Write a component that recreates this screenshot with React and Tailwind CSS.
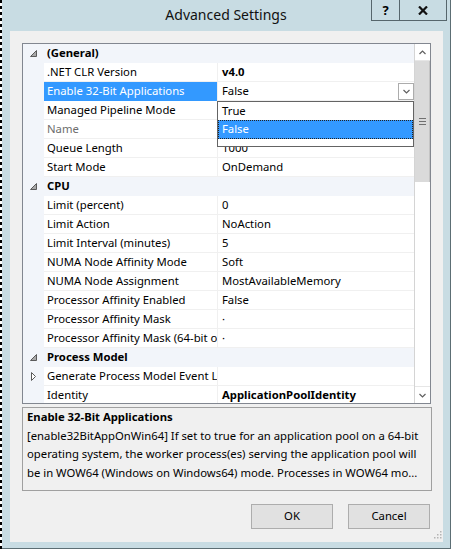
import React from 'react';

const rows = [
  { cat: true, name: '(General)' },
  { name: '.NET CLR Version', value: 'v4.0', bold: true },
  { name: 'Enable 32-Bit Applications', value: 'False', selected: true },
  { name: 'Managed Pipeline Mode', value: '' },
  { name: 'Name', value: '', dim: true },
  { name: 'Queue Length', value: '1000' },
  { name: 'Start Mode', value: 'OnDemand' },
  { cat: true, name: 'CPU' },
  { name: 'Limit (percent)', value: '0' },
  { name: 'Limit Action', value: 'NoAction' },
  { name: 'Limit Interval (minutes)', value: '5' },
  { name: 'NUMA Node Affinity Mode', value: 'Soft' },
  { name: 'NUMA Node Assignment', value: 'MostAvailableMemory' },
  { name: 'Processor Affinity Enabled', value: 'False' },
  { name: 'Processor Affinity Mask', value: '·' },
  { name: 'Processor Affinity Mask (64-bit option)', value: '·' },
  { cat: true, name: 'Process Model' },
  { name: 'Generate Process Model Event Log Entry', value: '', collapsed: true },
  { name: 'Identity', value: 'ApplicationPoolIdentity', bold: true },
];

const Expanded = () => (
  <svg width="7" height="7" viewBox="0 0 7 7">
    <path d="M6.5 0.5V6.5H0.5Z" fill="#a8a8a8" stroke="#5a5a5a" />
  </svg>
);

const Collapsed = () => (
  <svg width="6" height="9" viewBox="0 0 6 9">
    <path d="M0.5 0.5L4.5 4.5L0.5 8.5Z" fill="#fff" stroke="#5a5a5a" />
  </svg>
);

const Chevron = ({ up }) => (
  <svg width="7" height="5" viewBox="0 0 7 5">
    <path d={up ? 'M0.5 4L3.5 1L6.5 4' : 'M0.5 1L3.5 4L6.5 1'} fill="none" stroke="#606060" strokeWidth="1.2" />
  </svg>
);

const PropRow = ({ row }) => {
  if (row.cat) {
    return (
      <div className="flex h-[19px] shrink-0 bg-[#f2f5fa]">
        <div className="w-[21px] flex items-center justify-center">
          <Expanded />
        </div>
        <div className="pl-[3px] flex items-center font-bold">{row.name}</div>
      </div>
    );
  }
  return (
    <div className="flex h-[19px] shrink-0">
      <div className="w-[21px] bg-[#f2f5fa] flex items-center justify-center">
        {row.collapsed && <Collapsed />}
      </div>
      <div
        className={
          row.selected
            ? 'w-[174px] pl-[3px] flex items-center overflow-hidden whitespace-nowrap bg-[#3399ff] text-white border-r border-[#f0f0f0]'
            : row.dim
              ? 'w-[174px] pl-[3px] flex items-center overflow-hidden whitespace-nowrap text-[#6d6d6d] bg-white border-r border-b border-[#f0f0f0]'
              : 'w-[174px] pl-[3px] flex items-center overflow-hidden whitespace-nowrap bg-white border-r border-b border-[#f0f0f0]'
        }
      >
        {row.name}
      </div>
      <div className="flex-1 pl-[4px] flex items-center justify-between bg-white border-b border-[#f0f0f0] whitespace-nowrap overflow-hidden">
        <span className={row.bold ? 'font-bold' : ''}>{row.value}</span>
        {row.selected && (
          <div className="w-[16px] h-[17px] border border-[#acacac] bg-white flex items-center justify-center">
            <Chevron />
          </div>
        )}
      </div>
    </div>
  );
};

export default function App() {
  return (
    <div className="w-[456px] h-[556px] bg-white font-['Noto_Sans',sans-serif] text-[11.3px] text-black">
      <div className="flex w-[451px] h-[549px]">
        <div className="w-[2px] h-full bg-[repeating-linear-gradient(to_bottom,#000_0px,#000_3px,#fff_3px,#fff_6px)]" />
        <div className="flex-1 flex flex-col bg-[#c8dce3] border-r border-b border-[#5c6e74]">
          {/* Title bar */}
          <div className="h-[31px] shrink-0 grid grid-cols-[1fr_auto_1fr] items-start">
            <div />
            <div className="pt-[4px] text-[14px] leading-[22px] text-[#111]">Advanced Settings</div>
            <div className="flex justify-end pr-[3px]">
              <div className="flex h-[21px] border-x border-b border-[#56666c]">
                <div className="w-[28px] border-r border-[#56666c] flex items-center justify-center font-bold text-[13px] leading-none">
                  ?
                </div>
                <div className="w-[46px] flex items-center justify-center">
                  <svg width="10" height="9" viewBox="0 0 10 9">
                    <path d="M1 0.5L9 8.5M9 0.5L1 8.5" stroke="#111" strokeWidth="2.2" />
                  </svg>
                </div>
              </div>
            </div>
          </div>

          {/* Body */}
          <div className="relative ml-[8px] w-[433px] h-[511px] shrink-0 bg-[#f0f0f0] pt-[12px] pl-[12px]">
            {/* Property grid */}
            <div className="w-[409px] h-[361px] border border-[#828790] flex bg-white overflow-hidden">
              <div className="relative w-[391px] flex flex-col overflow-hidden">
                {rows.map((row) => (
                  <PropRow key={row.name} row={row} />
                ))}

                {/* Open dropdown list */}
                <div className="absolute left-[194px] top-[57px] w-[197px] h-[46px] border border-[#646464] bg-white">
                  <div className="h-[18px] pl-[4px] flex items-center">True</div>
                  <div className="h-[19px] pl-[3px] flex items-center bg-[#3399ff] text-white border border-dotted border-[#222]">
                    False
                  </div>
                </div>
              </div>

              {/* Scrollbar */}
              <div className="w-[16px] flex flex-col border-l border-[#d4d4d4] bg-white">
                <div className="h-[17px] shrink-0 flex items-center justify-center border-b border-[#e6e6e6]">
                  <Chevron up />
                </div>
                <div className="h-[121px] shrink-0 bg-[#dadada] border-r border-[#c4c4c4] flex items-center justify-center">
                  <svg width="7" height="7" viewBox="0 0 7 7">
                    <path d="M0 0.5H7M0 3.5H7M0 6.5H7" stroke="#707070" />
                  </svg>
                </div>
                <div className="flex-1" />
                <div className="h-[17px] shrink-0 flex items-center justify-center border-t border-[#e6e6e6]">
                  <Chevron />
                </div>
              </div>
            </div>

            {/* Description */}
            <div className="mt-[3px] w-[410px] h-[84px] border border-[#a0a0a0] px-[4px] leading-[18.5px] whitespace-nowrap overflow-hidden">
              <div className="font-bold">Enable 32-Bit Applications</div>
              <div>[enable32BitAppOnWin64] If set to true for an application pool on a 64-bit</div>
              <div>operating system, the worker process(es) serving the application pool will</div>
              <div>be in WOW64 (Windows on Windows64) mode. Processes in WOW64 mo...</div>
            </div>

            {/* Buttons */}
            <div className="mt-[13px] w-[409px] pr-[1px] flex justify-end gap-[15px]">
              <button className="w-[82px] h-[25px] border border-[#adadad] bg-[#e1e1e1] text-[11.3px]">OK</button>
              <button className="w-[82px] h-[25px] border border-[#adadad] bg-[#e1e1e1] text-[11.3px]">Cancel</button>
            </div>

            {/* Size grip */}
            <svg className="absolute right-[1px] bottom-[3px]" width="8" height="8" viewBox="0 0 8 8">
              <rect x="6" y="0" width="1.5" height="1.5" fill="#b4b4b4" />
              <rect x="3" y="3" width="1.5" height="1.5" fill="#b4b4b4" />
              <rect x="6" y="3" width="1.5" height="1.5" fill="#b4b4b4" />
              <rect x="0" y="6" width="1.5" height="1.5" fill="#b4b4b4" />
              <rect x="3" y="6" width="1.5" height="1.5" fill="#b4b4b4" />
              <rect x="6" y="6" width="1.5" height="1.5" fill="#b4b4b4" />
            </svg>
          </div>
        </div>
      </div>
    </div>
  );
}
